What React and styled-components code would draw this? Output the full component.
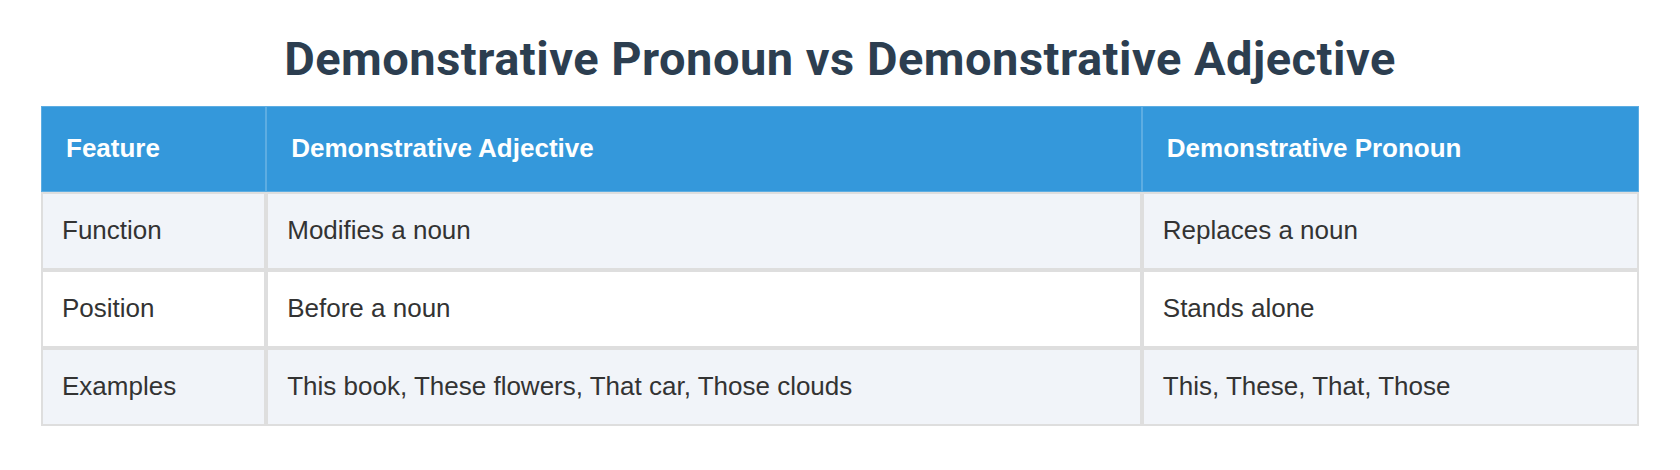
//____________IMPORT/EXPORT____________
import styled, { createGlobalStyle } from 'styled-components';
//____________IMPORT/EXPORT____________

//____________GLOBAL____________
const Global_Style = createGlobalStyle`
    html, body {
        margin: 0;
        padding: 0;
        background-color: white;
    }
`;
//____________GLOBAL____________

//____________PAGE____________
const Container_Page = styled.div`
    padding: 31px 41px 40px 41px;
    font-family: "Liberation Sans", Arial, sans-serif;
`;

const Title_Page = styled.h1`
    margin: 0 0 20px 0;
    font-family: Roboto, "Liberation Sans", sans-serif;
    font-size: 47px;
    font-weight: 700;
    letter-spacing: 0.5px;
    line-height: normal;
    color: #2c3e50;
    text-align: center;
`;
//____________PAGE____________

//____________TABLE____________
const Table_Compare = styled.table`
    width: 100%;
    border-collapse: separate;
    border-spacing: 0;
    font-size: 26px;
    line-height: 1.38;
`;

const Cell_Head = styled.th`
    background-color: #3498db;
    color: white;
    font-weight: 700;
    text-align: left;
    padding: 24px;
    border: 1px solid #5dade2;
`;

const Row_Body = styled.tr`
    background-color: ${(props) => (props.$striped ? '#f1f4f9' : 'white')};
`;

const Cell_Body = styled.td`
    color: #333;
    text-align: left;
    padding: 19px 19px;
    border: 2px solid #dedede;
`;
//____________TABLE____________

const rows = [
    ['Function', 'Modifies a noun', 'Replaces a noun'],
    ['Position', 'Before a noun', 'Stands alone'],
    ['Examples', 'This book, These flowers, That car, Those clouds', 'This, These, That, Those'],
];

export default function App() {
    return (
        <>
            <Global_Style />
            <Container_Page>
                <Title_Page>Demonstrative Pronoun vs Demonstrative Adjective</Title_Page>
                <Table_Compare>
                    <thead>
                        <tr>
                            <Cell_Head>Feature</Cell_Head>
                            <Cell_Head>Demonstrative Adjective</Cell_Head>
                            <Cell_Head>Demonstrative Pronoun</Cell_Head>
                        </tr>
                    </thead>
                    <tbody>
                        {rows.map((row, i) => (
                            <Row_Body key={row[0]} $striped={i % 2 === 0}>
                                {row.map((cell) => (
                                    <Cell_Body key={cell}>{cell}</Cell_Body>
                                ))}
                            </Row_Body>
                        ))}
                    </tbody>
                </Table_Compare>
            </Container_Page>
        </>
    );
}
